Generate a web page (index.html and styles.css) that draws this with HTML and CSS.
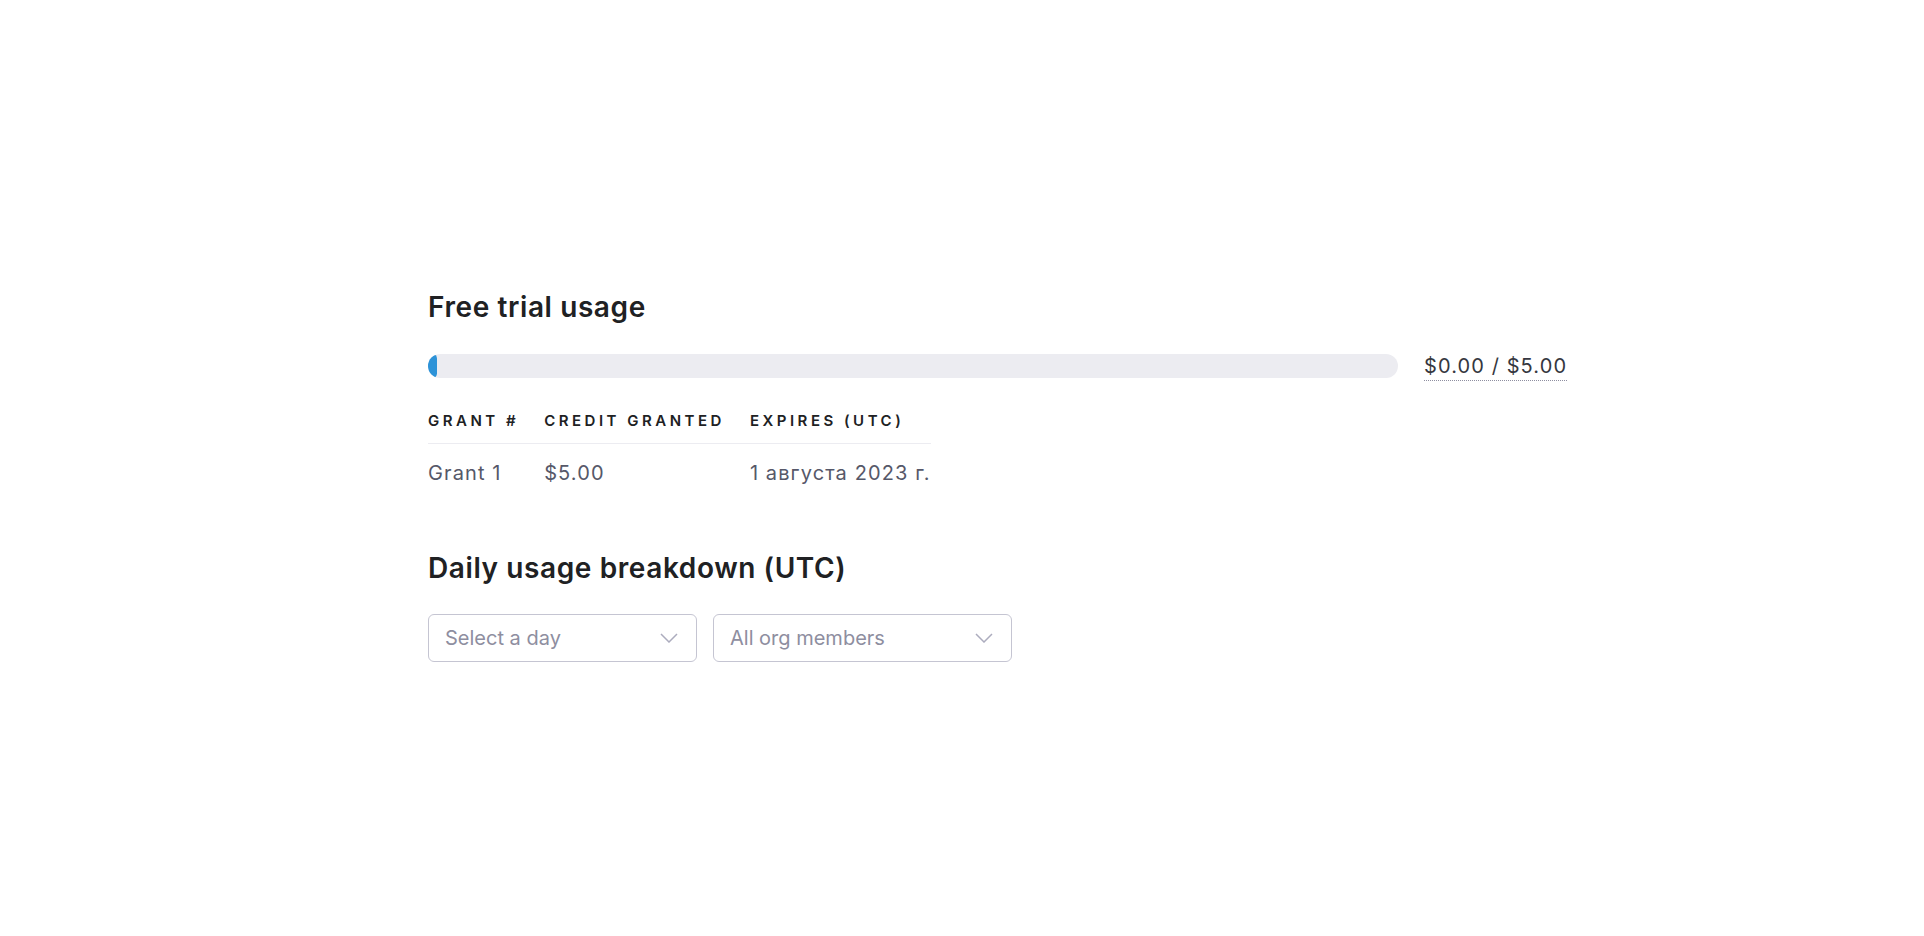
FILE: index.html
```html
<!DOCTYPE html>
<html lang="en">
<head>
    <meta charset="UTF-8" />
    <title>Usage</title>
    <link rel="stylesheet" href="styles.css">
</head>
<body>

<div class="page">
    <h2>Free trial usage</h2>

    <div class="usage">
        <div class="usage-bar">
            <div class="usage-fill" style="width: 9px;"></div>
        </div>
        <span class="usage-total">$0.00 / $5.00</span>
    </div>

    <table class="grants">
        <thead>
            <tr>
                <th>Grant #</th>
                <th>Credit granted</th>
                <th>Expires (UTC)</th>
            </tr>
        </thead>
        <tbody>
            <tr>
                <td>Grant 1</td>
                <td>$5.00</td>
                <td>1 августа 2023 г.</td>
            </tr>
        </tbody>
    </table>

    <h2 class="breakdown-title">Daily usage breakdown (UTC)</h2>

    <div class="filters">
        <div class="select select-day">
            <span>Select a day</span>
            <svg class="chevron" width="18" height="10" viewBox="0 0 18 10">
                <path d="M1 1l8 8 8-8" fill="none" stroke="#acacbe" stroke-width="1.5" />
            </svg>
        </div>
        <div class="select select-member">
            <span>All org members</span>
            <svg class="chevron" width="18" height="10" viewBox="0 0 18 10">
                <path d="M1 1l8 8 8-8" fill="none" stroke="#acacbe" stroke-width="1.5" />
            </svg>
        </div>
    </div>
</div>

</body>
</html>
```

FILE: styles.css
```css
body {
    font-family: Inter, "Noto Sans", sans-serif;
    margin: 0;
    color: #202123;
    background: #fff;
}

.page {
    padding: 289px 0 0 428px;
}

h2 {
    font-size: 28px;
    line-height: 36px;
    font-weight: 600;
    letter-spacing: 0.6px;
    margin: 0;
    color: #202123;
}

.usage {
    display: flex;
    align-items: center;
    gap: 26px;
    margin-top: 27px;
}

.usage-bar {
    width: 970px;
    height: 24px;
    background-color: #ececf1;
    border-radius: 12px;
    overflow: hidden;
}

.usage-fill {
    height: 100%;
    background-color: #2d93d8;
    border-radius: 12px;
}

.usage-total {
    font-size: 20px;
    line-height: 28px;
    letter-spacing: 1.1px;
    color: #353740;
    text-decoration: underline dotted #8e8ea0;
    text-underline-offset: 7px;
    text-decoration-thickness: 1px;
}

.grants {
    border-collapse: collapse;
    margin-top: 31px;
}

.grants th {
    font-size: 15px;
    line-height: 20px;
    font-weight: 600;
    text-transform: uppercase;
    letter-spacing: 3.5px;
    text-align: left;
    padding: 0 25px 12px 0;
    border-bottom: 1px solid #ececf1;
    color: #202123;
}

.grants td {
    font-size: 20px;
    line-height: 28px;
    letter-spacing: 1.1px;
    color: #565869;
    padding: 15px 25px 0 0;
}

.grants th:last-child,
.grants td:last-child {
    padding-right: 0;
}

.breakdown-title {
    margin-top: 63px;
}

.filters {
    display: flex;
    gap: 16px;
    margin-top: 28px;
}

.select {
    display: flex;
    align-items: center;
    justify-content: space-between;
    box-sizing: border-box;
    height: 48px;
    padding: 0 18px 0 16px;
    border: 1px solid #c5c5d2;
    border-radius: 6px;
    font-size: 20px;
    color: #8e8ea0;
}

.select-day {
    width: 269px;
}

.select-member {
    width: 299px;
}
```
